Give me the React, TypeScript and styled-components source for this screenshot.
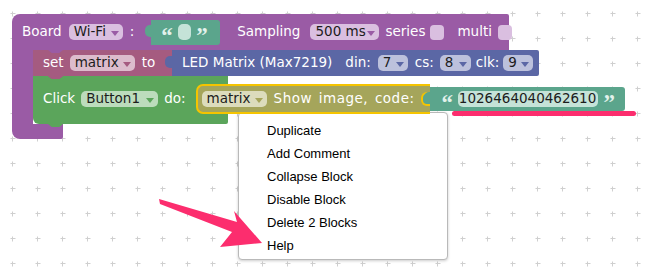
import styled, {createGlobalStyle} from 'styled-components';

const PURPLE = '#9a5ba5';
const ROSE = '#a55b80';
const BLUE = '#5b67a5';
const GREEN = '#5ba55b';
const OLIVE = '#a5a55b';
const TEAL = '#5ba58c';
const YELLOW = '#f5c400';

const GlobalStyle = createGlobalStyle`
  html, body {
    margin: 0;
    padding: 0;
    background: #fff;
  }
  body {
    font-family: "DejaVu Sans", sans-serif;
  }
`;

const Workspace = styled.div`
  position: relative;
  width: 651px;
  height: 276px;
  overflow: hidden;
  background: #fff;
`;

const GridLayer = styled.svg`
  position: absolute;
  left: 0;
  top: 0;
`;

// the block group sits at its place on the workspace canvas
const BlockGroup = styled.div`
  position: absolute;
  left: 12px;
  top: 14px;
  z-index: 2;
  display: flex;
  flex-direction: column;
`;

const BoardTop = styled.div`
  display: flex;
  align-items: center;
  width: 497px;
  height: 36px;
  box-sizing: border-box;
  padding-left: 10px;
  background: ${PURPLE};
  border-radius: 8px 2px 0 0;
`;

const BoardBody = styled.div`
  display: flex;
`;

const Spine = styled.div`
  width: 21px;
  background: ${PURPLE};
`;

const Stack = styled.div`
  display: flex;
  flex-direction: column;
`;

const Cap = styled.div`
  width: 51px;
  height: 15px;
  background: ${PURPLE};
  border-radius: 0 0 2px 8px;
`;

const Label = styled.span<{$ml?: number; $wide?: boolean}>`
  margin-left: ${p => p.$ml ?? 0}px;
  color: #fff;
  font-size: 13.5px;
  line-height: 1;
  white-space: nowrap;
  flex-shrink: 0;
  letter-spacing: ${p => (p.$wide ? '0.5px' : 'normal')};
  word-spacing: ${p => (p.$wide ? '2px' : 'normal')};
`;

const Field = styled.span<{$w: number; $bg: string; $ml?: number}>`
  display: inline-flex;
  align-items: center;
  justify-content: space-between;
  flex-shrink: 0;
  width: ${p => p.$w}px;
  height: 16px;
  margin-left: ${p => p.$ml ?? 0}px;
  padding: 0 4px 0 5px;
  box-sizing: border-box;
  border-radius: 5px;
  background: ${p => p.$bg};
  color: #1c1c1c;
  font-size: 13.5px;
  line-height: 1;
  white-space: nowrap;
`;

const Arrow = styled.span<{$c: string}>`
  width: 0;
  height: 0;
  margin-top: 2px;
  border-left: 4.5px solid transparent;
  border-right: 4.5px solid transparent;
  border-top: 5px solid ${p => p.$c};
`;

const Check = styled.span<{$ml?: number}>`
  width: 14px;
  height: 15px;
  margin-left: ${p => p.$ml ?? 0}px;
  border-radius: 4px;
  background: #dabfe0;
  flex-shrink: 0;
`;

// value block with an output tab on its left side
const ValueBlock = styled.div<{$w: number; $h: number; $bg: string; $ml?: number}>`
  position: relative;
  display: flex;
  align-items: center;
  flex-shrink: 0;
  width: ${p => p.$w}px;
  height: ${p => p.$h}px;
  margin-left: ${p => p.$ml ?? 0}px;
  padding-left: 10px;
  box-sizing: border-box;
  background: ${p => p.$bg};
  border-radius: 0 3px 3px 0;

  &::before {
    content: '';
    position: absolute;
    left: -6px;
    top: 5px;
    width: 6px;
    height: 12px;
    background: ${p => p.$bg};
    border-radius: 5px 0 0 5px;
  }
`;

const Quote = styled.span<{$ml?: number}>`
  position: relative;
  top: 3px;
  display: inline-block;
  width: 11px;
  margin-left: ${p => p.$ml ?? 0}px;
  color: #e2f1eb;
  font-family: "Liberation Serif", serif;
  font-weight: bold;
  font-size: 23px;
  line-height: 1;
  text-align: center;
  flex-shrink: 0;
`;

const TextField = styled.span<{$w: number; $ml?: number}>`
  display: inline-flex;
  align-items: center;
  justify-content: center;
  flex-shrink: 0;
  width: ${p => p.$w}px;
  height: 16px;
  margin-left: ${p => p.$ml ?? 0}px;
  border-radius: 5px;
  background: #c5e3d8;
  color: #1c1c1c;
  font-size: 13.5px;
  line-height: 1;
`;

const StatementRow = styled.div`
  display: flex;
`;

const StatementBlock = styled.div<{$w: number; $h: number; $bg: string; $notch: string}>`
  position: relative;
  display: flex;
  align-items: center;
  flex-shrink: 0;
  width: ${p => p.$w}px;
  height: ${p => p.$h}px;
  padding-left: 10px;
  box-sizing: border-box;
  background: ${p => p.$bg};

  &::before {
    content: '';
    position: absolute;
    left: 15px;
    top: 0;
    width: 15px;
    height: 3px;
    background: ${p => p.$notch};
    clip-path: polygon(0 0, 100% 0, 75% 100%, 25% 100%);
  }

  &::after {
    content: '';
    position: absolute;
    left: 15px;
    bottom: -3px;
    width: 15px;
    height: 3px;
    z-index: 1;
    background: ${p => p.$bg};
    clip-path: polygon(0 0, 100% 0, 75% 100%, 25% 100%);
  }
`;

const LedBlock = styled.div`
  display: flex;
  align-items: center;
  flex-shrink: 0;
  width: 367px;
  height: 26px;
  padding-left: 10px;
  box-sizing: border-box;
  background: ${BLUE};
  border-radius: 0 2px 2px 0;
  position: relative;

  &::before {
    content: '';
    position: absolute;
    left: -7px;
    top: 6px;
    width: 7px;
    height: 12px;
    background: ${BLUE};
    border-radius: 5px 0 0 5px;
  }
`;

const ClickBlock = styled(StatementBlock)`
  padding: 8px 0 10px 10px;
  border-radius: 0 0 2px 6px;
`;

const ShowBlock = styled.div`
  position: relative;
  display: flex;
  align-items: center;
  flex-shrink: 0;
  width: 234px;
  height: 30px;
  margin-left: 10px;
  padding-left: 4px;
  box-sizing: border-box;
  background: ${OLIVE};
  border: 2px solid ${YELLOW};
  border-right: none;
  border-radius: 7px 0 0 7px;
`;

const Slot = styled.span`
  width: 9px;
  height: 14px;
  margin-left: auto;
  box-sizing: border-box;
  background: ${TEAL};
  border: 2px solid ${YELLOW};
  border-right: none;
  border-radius: 6px 0 0 6px;
`;

const Menu = styled.div`
  position: absolute;
  left: 238px;
  top: 112px;
  z-index: 1;
  width: 210px;
  height: 148px;
  padding-top: 6px;
  box-sizing: border-box;
  background: #fff;
  border: 1px solid #b9b9b9;
  border-radius: 4px;
  box-shadow: 0 1px 3px rgba(0, 0, 0, 0.2);
  font-family: "Liberation Sans", Arial, sans-serif;
  font-size: 13px;
  color: #000;
`;

const MenuItem = styled.div`
  height: 23px;
  line-height: 23px;
  padding-left: 28px;
`;

const Underline = styled.div`
  position: absolute;
  left: 452px;
  top: 111px;
  z-index: 3;
  width: 184px;
  height: 5px;
  border-radius: 3px;
  background: #fc2d6e;
`;

const Overlay = styled.svg`
  position: absolute;
  left: 0;
  top: 0;
  z-index: 4;
  pointer-events: none;
`;

const menuItems = ['Duplicate', 'Add Comment', 'Collapse Block', 'Disable Block', 'Delete 2 Blocks', 'Help'];

const App = () => {
  return (
    <>
      <GlobalStyle />
      <Workspace>
        <GridLayer width={651} height={276}>
          <defs>
            <pattern id="grid" width={25} height={25} patternUnits="userSpaceOnUse">
              <path d="M10.5 13.5h5M12.5 11.5v5" stroke="#cfcfcf" strokeWidth={1} fill="none" />
            </pattern>
          </defs>
          <rect width={651} height={276} fill="url(#grid)" />
        </GridLayer>

        <BlockGroup>
          <BoardTop>
            <Label>Board</Label>
            <Field $ml={7} $w={54} $bg="#dabfe0">
              Wi-Fi
              <Arrow $c={PURPLE} />
            </Field>
            <Label $ml={7}>:</Label>
            <ValueBlock $ml={17} $w={69} $h={25} $bg={TEAL}>
              <Quote>“</Quote>
              <TextField $ml={6} $w={13} />
              <Quote $ml={5}>”</Quote>
            </ValueBlock>
            <Label $ml={17}>Sampling</Label>
            <Field $ml={10} $w={69} $bg="#dabfe0">
              500 ms
              <Arrow $c={PURPLE} />
            </Field>
            <Label $ml={6}>series</Label>
            <Check $ml={5} />
            <Label $ml={13}>multi</Label>
            <Check $ml={6} />
          </BoardTop>

          <BoardBody>
            <Spine />
            <Stack>
              <StatementRow>
                <StatementBlock $w={139} $h={26} $bg={ROSE} $notch={PURPLE}>
                  <Label>set</Label>
                  <Field $ml={6} $w={65} $bg="#dcbccc">
                    matrix
                    <Arrow $c={ROSE} />
                  </Field>
                  <Label $ml={7}>to</Label>
                </StatementBlock>
                <LedBlock>
                  <Label>LED Matrix (Max7219)</Label>
                  <Label $ml={13}>din:</Label>
                  <Field $ml={7} $w={30} $bg="#bcc1dc">
                    7
                    <Arrow $c={BLUE} />
                  </Field>
                  <Label $ml={7}>cs:</Label>
                  <Field $ml={6} $w={31} $bg="#bcc1dc">
                    8
                    <Arrow $c={BLUE} />
                  </Field>
                  <Label $ml={5}>clk:</Label>
                  <Field $ml={4} $w={30} $bg="#bcc1dc">
                    9
                    <Arrow $c={BLUE} />
                  </Field>
                </LedBlock>
              </StatementRow>

              <ClickBlock $w={195} $h={48} $bg={GREEN} $notch={ROSE}>
                <Label>Click</Label>
                <Field $ml={6} $w={77} $bg="#bcdcbc">
                  Button1
                  <Arrow $c={GREEN} />
                </Field>
                <Label $ml={6}>do:</Label>
                <ShowBlock>
                  <Field $w={65} $bg="#dcdcbc">
                    matrix
                    <Arrow $c={OLIVE} />
                  </Field>
                  <Label $ml={7} $wide>Show image, code:</Label>
                  <Slot />
                </ShowBlock>
                <ValueBlock $w={195} $h={24} $bg={TEAL}>
                  <Quote $ml={2}>“</Quote>
                  <TextField $ml={5} $w={140}>1026464040462610</TextField>
                  <Quote $ml={6}>”</Quote>
                </ValueBlock>
              </ClickBlock>
            </Stack>
          </BoardBody>
          <Cap />
        </BlockGroup>

        <Menu>
          {menuItems.map(item => (
            <MenuItem key={item}>{item}</MenuItem>
          ))}
        </Menu>

        <Underline />

        <Overlay width={651} height={276}>
          <polygon points="159,199 237,222 234,211 262,243 220,247 232,232 160,204" fill="#fc2d6e" />
        </Overlay>
      </Workspace>
    </>
  );
};

export default App;
